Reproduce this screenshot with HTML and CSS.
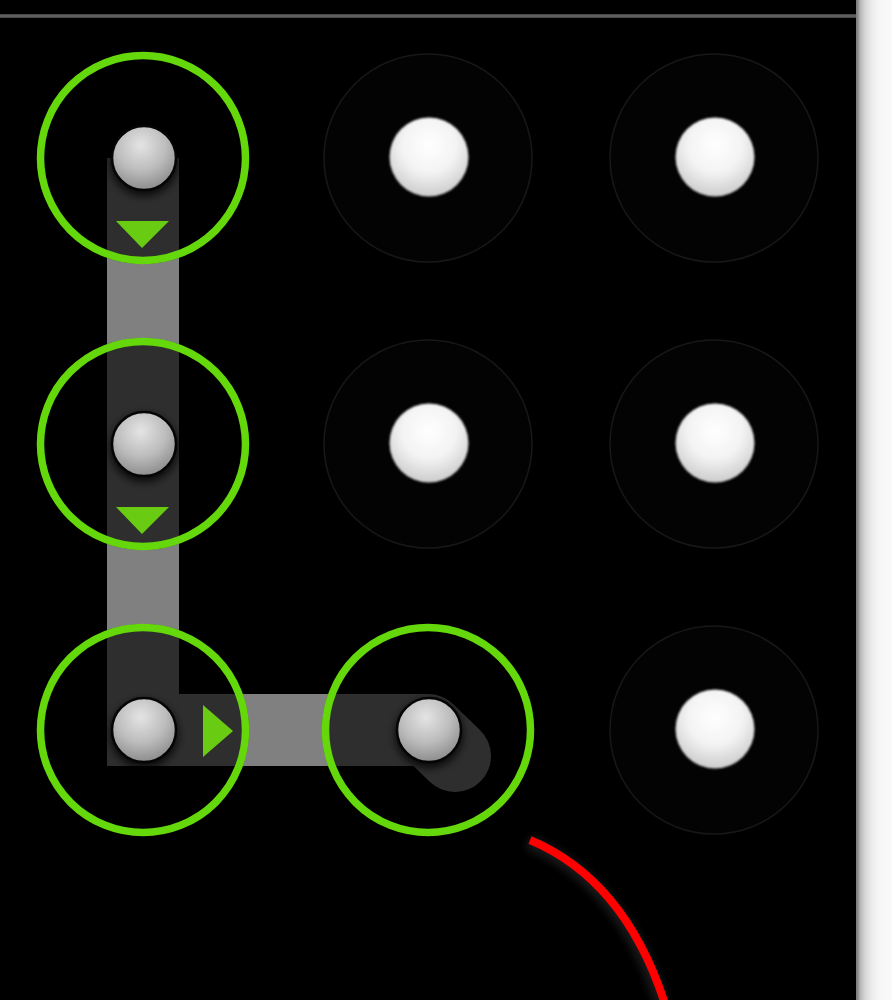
FILE: index.html
```html
<!DOCTYPE html>
<html lang="en">
<head>
<meta charset="utf-8">
<title>Pattern lock</title>
<link rel="stylesheet" href="styles.css">
</head>
<body>
<div class="frame">
  <main class="screen">
    <div class="topline"></div>
    <svg class="pattern" width="856" height="982" viewBox="0 18 856 982" xmlns="http://www.w3.org/2000/svg">
      <defs>
        <radialGradient id="gWhite" cx="50%" cy="35%" r="70%">
          <stop offset="0" stop-color="#ffffff"/>
          <stop offset="0.5" stop-color="#f3f3f3"/>
          <stop offset="1" stop-color="#c6c6c6"/>
        </radialGradient>
        <radialGradient id="gGrey" cx="45%" cy="30%" r="72%">
          <stop offset="0" stop-color="#e4e4e4"/>
          <stop offset="0.55" stop-color="#bcbcbc"/>
          <stop offset="1" stop-color="#8a8a8a"/>
        </radialGradient>
        <filter id="soft" x="-20%" y="-20%" width="140%" height="140%">
          <feGaussianBlur stdDeviation="4"/>
        </filter>
        <filter id="edge" x="-10%" y="-10%" width="120%" height="120%">
          <feGaussianBlur stdDeviation="1"/>
        </filter>
      </defs>

      <!-- unselected cells -->
      <circle class="ring-off" cx="428" cy="158" r="104"/>
      <circle class="ring-off" cx="714" cy="158" r="104"/>
      <circle class="ring-off" cx="428" cy="444" r="104"/>
      <circle class="ring-off" cx="714" cy="444" r="104"/>
      <circle class="ring-off" cx="714" cy="730" r="104"/>

      <!-- drawn path -->
      <path class="band" d="M143,158 L143,730 L428,730"/>
      <path class="band band-tail" d="M428,730 L455,756"/>

      <!-- dim inside selected cells -->
      <circle class="dim" cx="143" cy="158" r="106"/>
      <circle class="dim" cx="143" cy="444" r="106"/>
      <circle class="dim" cx="143" cy="730" r="106"/>
      <circle class="dim" cx="428" cy="730" r="106"/>

      <!-- green rings -->
      <circle class="ring-on" cx="143" cy="158" r="102.5"/>
      <circle class="ring-on" cx="143" cy="444" r="102.5"/>
      <circle class="ring-on" cx="143" cy="730" r="102.5"/>
      <circle class="ring-on" cx="428" cy="730" r="102.5"/>

      <!-- white dots -->
      <circle class="dot-white" cx="429" cy="157" r="39.5" filter="url(#edge)"/>
      <circle class="dot-white" cx="715" cy="157" r="39.5" filter="url(#edge)"/>
      <circle class="dot-white" cx="429" cy="443" r="39.5" filter="url(#edge)"/>
      <circle class="dot-white" cx="715" cy="443" r="39.5" filter="url(#edge)"/>
      <circle class="dot-white" cx="715" cy="729" r="39.5" filter="url(#edge)"/>

      <!-- selected dots -->
      <circle class="dot-shadow" cx="144" cy="162" r="34" filter="url(#soft)"/>
      <circle class="dot-shadow" cx="144" cy="448" r="34" filter="url(#soft)"/>
      <circle class="dot-shadow" cx="144" cy="734" r="34" filter="url(#soft)"/>
      <circle class="dot-shadow" cx="429" cy="734" r="34" filter="url(#soft)"/>
      <circle class="dot-grey" cx="144" cy="158" r="32"/>
      <circle class="dot-grey" cx="144" cy="444" r="32"/>
      <circle class="dot-grey" cx="144" cy="730" r="32"/>
      <circle class="dot-grey" cx="429" cy="730" r="32"/>

      <!-- direction arrows -->
      <polygon class="arrow" points="116,221 169,221 142,248"/>
      <polygon class="arrow" points="116,507 169,507 142,534"/>
      <polygon class="arrow" points="203,705 203,757 233,731"/>

      <!-- red stroke -->
      <path class="red-glow" d="M528,842 Q623,882 662,1004" filter="url(#soft)"/>
      <path class="red" d="M530,840 Q625,880 665,1004"/>
    </svg>
  </main>
  <aside class="edge"></aside>
</div>
</body>
</html>
```

FILE: styles.css
```css
html, body {
  margin: 0;
  padding: 0;
  background: #000;
  overflow: hidden;
}

.frame {
  display: flex;
  width: 892px;
  height: 1000px;
}

.screen {
  width: 856px;
  flex: 0 0 856px;
  background: #000;
  display: flex;
  flex-direction: column;
}

.topline {
  margin-top: 14px;
  height: 4px;
  background: linear-gradient(#3e3e3e, #686868 50%, #3e3e3e);
}

.pattern {
  display: block;
}

.edge {
  flex: 1;
  background: linear-gradient(to right, #7a7a7a 0, #8c8c8c 2px, #b4b4b4 4px, #d6d6d6 9px, #ececec 16px, #f7f7f7 24px, #f9f9f9 100%);
}

.ring-off {
  fill: #030303;
  stroke: #171717;
  stroke-width: 1.6;
}

.band {
  fill: none;
  stroke: #808080;
  stroke-width: 72;
  stroke-linecap: butt;
  stroke-linejoin: miter;
}

.band-tail {
  stroke-linecap: round;
}

.dim {
  fill: #000;
  fill-opacity: 0.64;
}

.ring-on {
  fill: none;
  stroke: #64d80a;
  stroke-width: 7.5;
}

.dot-white {
  fill: url(#gWhite);
}

.dot-shadow {
  fill: #000;
  fill-opacity: 0.8;
}

.dot-grey {
  fill: url(#gGrey);
  stroke: #050505;
  stroke-width: 2.5;
}

.arrow {
  fill: #6acc12;
}

.red-glow {
  fill: none;
  stroke: #2a2a2a;
  stroke-width: 14;
  opacity: 0.6;
}

.red {
  fill: none;
  stroke: #ff0000;
  stroke-width: 8;
}
```
